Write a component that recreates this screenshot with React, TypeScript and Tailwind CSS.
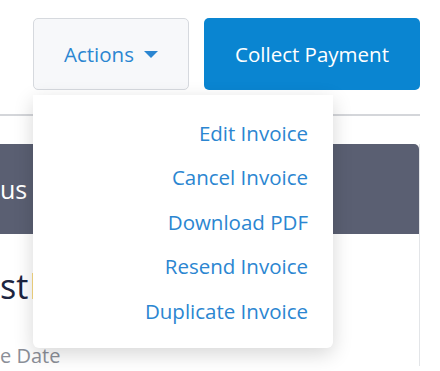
const actions = ['Edit Invoice', 'Cancel Invoice', 'Download PDF', 'Resend Invoice', 'Duplicate Invoice'];

function Caret() {
  return (
    <svg width="14" height="8" viewBox="0 0 14 8" className="ml-[10px] mt-[2px]">
      <path d="M0 0 L14 0 L7 7 Z" fill="#2b86d1" />
    </svg>
  );
}

export default function App() {
  return (
    <div
      className="relative w-[440px] h-[371px] overflow-hidden bg-white"
      style={{ fontFamily: '"Open Sans", "Noto Sans", sans-serif' }}
    >
      {/* toolbar */}
      <div className="flex justify-end gap-[15px] pt-[18px] pr-[20px]">
        <button className="flex items-center justify-center w-[156px] h-[72px] rounded-[5px] border border-[#d6d9de] bg-[#f7f8fa] text-[20.5px] text-[#2b86d1]">
          Actions
          <Caret />
        </button>
        <button className="w-[216px] h-[72px] rounded-[5px] bg-[#0a85d1] text-[20.5px] text-white">
          Collect Payment
        </button>
      </div>

      <div className="mt-[24px] mr-[20px] h-[2px] bg-[#d4d6da]" />

      {/* invoice card (mostly covered) */}
      <div className="mt-[28px] mr-[20px] border-r border-[#e3e5e8]">
        <div className="flex items-center h-[90px] rounded-tr-[5px] bg-[#5a5f72] text-[25px] text-white leading-none">
          <span>us</span>
        </div>
        <div className="pt-[30px]">
          <div className="flex items-center h-[44px] text-[34px] leading-none text-[#1d2540]">
            <span>st</span>
            <span className="ml-[1px] text-[36px] text-[#a2813a]">I</span>
          </div>
          <div className="mt-[38px] text-[20px] leading-none text-[#8b8f98]">e Date</div>
        </div>
      </div>

      {/* dropdown menu */}
      <div className="absolute left-[33px] top-[95px] w-[300px] h-[253px] rounded-b-[6px] bg-white shadow-[0_6px_20px_rgba(0,0,0,0.16)] pt-[16px]">
        {actions.map((label) => (
          <div
            key={label}
            className="flex items-center justify-end h-[44.5px] pr-[25px] text-[20.5px] text-[#2b86d1]"
          >
            {label}
          </div>
        ))}
      </div>
    </div>
  );
}
